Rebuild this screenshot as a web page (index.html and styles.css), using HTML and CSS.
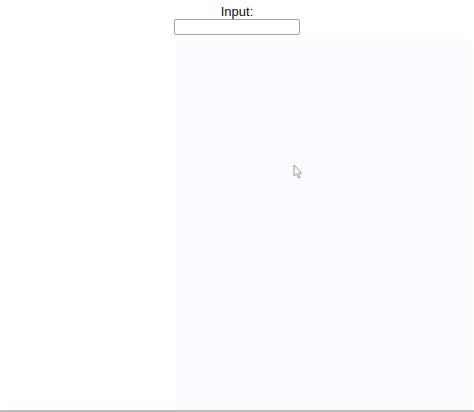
FILE: index.html
```html
<!DOCTYPE html>
<html>
<head>
<meta charset="utf-8">
<link rel="stylesheet" href="styles.css">
</head>
<body>
<div class="page">
  <div class="top">
    <label class="label" for="inp">Input:</label>
    <input id="inp" class="field" type="text">
  </div>
  <div class="stage">
    <div class="left"><div class="strip"></div></div>
    <div class="canvas">
      <svg class="cursor" width="12" height="16" viewBox="0 0 12 16">
        <path d="M1 1 L1 12 L3.5 9.8 L5.5 14 L7.2 13.2 L5.3 9.2 L8.6 9.2 Z" fill="#fff" stroke="#9a9a9a" stroke-width="1"/>
      </svg>
    </div>
  </div>
</div>
</body>
</html>
```
FILE: styles.css
```css
html, body {
  margin: 0;
  padding: 0;
  background: #ffffff;
}
.page {
  width: 474px;
  height: 410px;
  border-bottom: 2px solid #bdbdbd;
  display: flex;
  flex-direction: column;
  font-family: "Liberation Sans", Arial, sans-serif;
}
.top {
  display: flex;
  flex-direction: column;
  align-items: center;
  padding-top: 5px;
}
.label {
  font-size: 13px;
  line-height: 14px;
  color: #111;
}
.field {
  box-sizing: border-box;
  width: 126px;
  height: 16px;
  margin: 0;
  padding: 0 3px;
  border: 1px solid #a3a3a3;
  border-radius: 2px;
  background: #fff;
  font-size: 12px;
}
.stage {
  flex: 1;
  display: grid;
  grid-template-columns: 176px 1fr;
  padding-top: 5px;
  padding-right: 2px;
}
.left {
  display: flex;
  flex-direction: column;
  justify-content: flex-end;
  padding-left: 8px;
}
.strip {
  height: 10px;
  background: #fdfdfd;
}
.canvas {
  position: relative;
  background: #fcfafe;
}
.cursor {
  position: absolute;
  left: 117px;
  top: 124px;
}
```
